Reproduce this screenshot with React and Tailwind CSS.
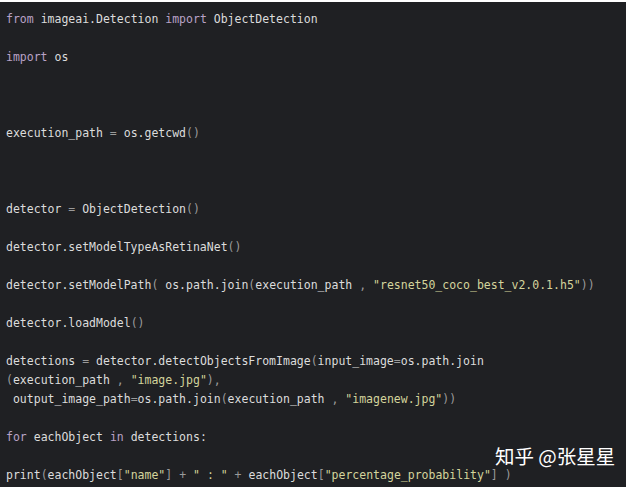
import React from "react";

const K = ({ children }) => <span className="text-[#b9a2c6]">{children}</span>;
const S = ({ children }) => <span className="text-[#d4d49c]">{children}</span>;
const O = ({ children }) => <span className="text-[#9a9a9a]">{children}</span>;

const Line = ({ children }) => (
  <div className="h-[19px] leading-[19px] whitespace-pre">{children}</div>
);
const Blank = ({ n = 1 }) =>
  Array.from({ length: n }).map((_, i) => <div key={i} className="h-[19px]" />);

export default function App() {
  return (
    <div className="w-[630px] h-[487px] bg-white pt-[2px] pr-[4px] overflow-hidden">
      <div
        className="relative h-full bg-[#1f2023] pl-[6px] pt-[8px] text-[11.5px] text-[#dcdcdc]"
        style={{ fontFamily: '"DejaVu Sans Mono", "Liberation Mono", monospace' }}
      >
        <div className="flex flex-col">
          <Line>
            <K>from</K> imageai.Detection <K>import</K> ObjectDetection
          </Line>
          <Blank />
          <Line>
            <K>import</K> os
          </Line>
          <Blank n={3} />
          <Line>
            execution_path <O>=</O> os.getcwd<O>()</O>
          </Line>
          <Blank n={3} />
          <Line>
            detector <O>=</O> ObjectDetection<O>()</O>
          </Line>
          <Blank />
          <Line>
            detector.setModelTypeAsRetinaNet<O>()</O>
          </Line>
          <Blank />
          <Line>
            detector.setModelPath<O>(</O> os.path.join<O>(</O>execution_path <O>,</O>{" "}
            <S>"resnet50_coco_best_v2.0.1.h5"</S>
            <O>))</O>
          </Line>
          <Blank />
          <Line>
            detector.loadModel<O>()</O>
          </Line>
          <Blank />
          <Line>
            detections <O>=</O> detector.detectObjectsFromImage<O>(</O>input_image
            <O>=</O>os.path.join
          </Line>
          <Line>
            <O>(</O>execution_path <O>,</O> <S>"image.jpg"</S>
            <O>),</O>
          </Line>
          <Line>
            {" "}output_image_path<O>=</O>os.path.join<O>(</O>execution_path <O>,</O>{" "}
            <S>"imagenew.jpg"</S>
            <O>))</O>
          </Line>
          <Blank />
          <Line>
            <K>for</K> eachObject <K>in</K> detections:
          </Line>
          <Blank />
          <Line>
            print<O>(</O>eachObject<O>[</O>
            <S>"name"</S>
            <O>]</O> <O>+</O> <S>" : "</S> <O>+</O> eachObject<O>[</O>
            <S>"percentage_probability"</S>
            <O>]</O> <O>)</O>
          </Line>
        </div>
        <div
          className="absolute left-[495px] top-[442px] text-[19.5px] leading-[24px] text-white whitespace-pre"
          style={{ fontFamily: '"Noto Sans CJK SC", "Noto Sans", sans-serif' }}
        >
          知乎 @张星星
        </div>
      </div>
    </div>
  );
}
